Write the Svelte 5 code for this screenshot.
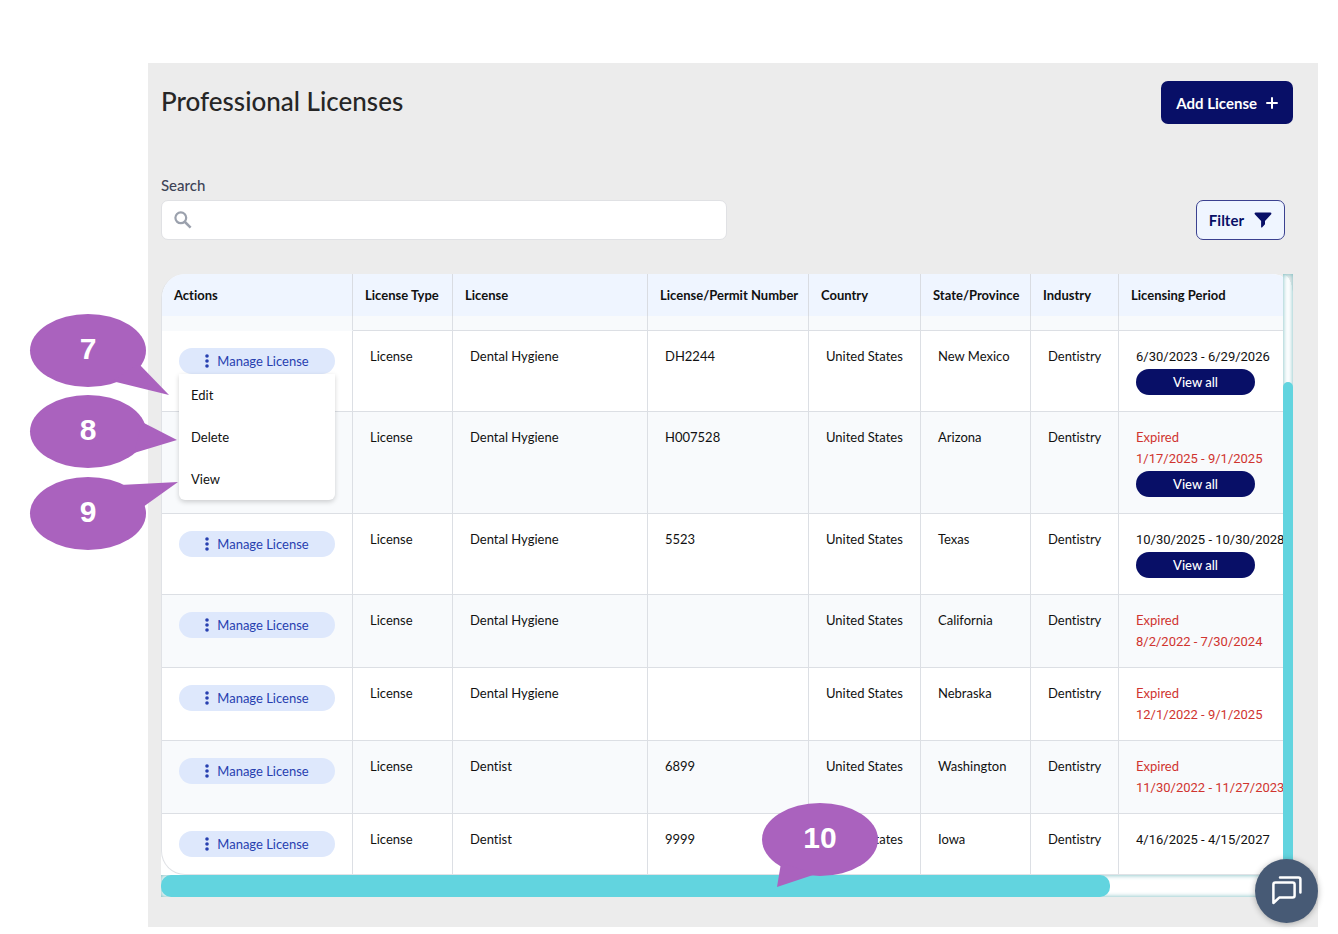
<script>
	const columns = [
		{ label: 'Actions', width: 191 },
		{ label: 'License Type', width: 100 },
		{ label: 'License', width: 195 },
		{ label: 'License/Permit Number', width: 161 },
		{ label: 'Country', width: 112 },
		{ label: 'State/Province', width: 110 },
		{ label: 'Industry', width: 88 },
		{ label: 'Licensing Period' }
	];

	const licenses = [
		{ license: 'Dental Hygiene', number: 'DH2244', state: 'New Mexico', period: '6/30/2023 - 6/29/2026', more: true },
		{ license: 'Dental Hygiene', number: 'H007528', state: 'Arizona', period: '1/17/2025 - 9/1/2025', expired: true, more: true },
		{ license: 'Dental Hygiene', number: '5523', state: 'Texas', period: '10/30/2025 - 10/30/2028', more: true },
		{ license: 'Dental Hygiene', number: '', state: 'California', period: '8/2/2022 - 7/30/2024', expired: true },
		{ license: 'Dental Hygiene', number: '', state: 'Nebraska', period: '12/1/2022 - 9/1/2025', expired: true },
		{ license: 'Dentist', number: '6899', state: 'Washington', period: '11/30/2022 - 11/27/2023', expired: true },
		{ license: 'Dentist', number: '9999', state: 'Iowa', period: '4/16/2025 - 4/15/2027' }
	];

	// x/y is the top left of the bubble, the tail is relative to it
	const callouts = [
		{ label: '7', x: 30, y: 314, tail: '109,50 139,81 82,67' },
		{ label: '8', x: 30, y: 395, tail: '112,27 147,45 104,58' },
		{ label: '9', x: 30, y: 477, tail: '90,8 148,5 113,30' },
		{ label: '10', x: 762, y: 803, tail: '19,60 15,84 54,71' }
	];

	let query = $state('');
	let openMenu = $state(0);

	function toggleMenu(i) {
		openMenu = openMenu === i ? -1 : i;
	}
</script>

<div class="page">
	<main>
		<header>
			<h1>Professional Licenses</h1>
			<button class="add">
				Add License
				<svg width="12" height="12" viewBox="0 0 12 12" aria-hidden="true">
					<path d="M6 1v10M1 6h10" stroke="currentColor" stroke-width="2" stroke-linecap="round" />
				</svg>
			</button>
		</header>

		<div class="toolbar">
			<div class="search">
				<label for="search">Search</label>
				<div class="field">
					<svg width="18" height="18" viewBox="0 0 18 18" fill="none" aria-hidden="true">
						<circle cx="6.8" cy="6.8" r="5.4" stroke="currentColor" stroke-width="2.2" />
						<path d="M11 11l5.6 5.6" stroke="currentColor" stroke-width="2.5" />
					</svg>
					<input id="search" type="text" bind:value={query} />
				</div>
			</div>
			<button class="filter">
				Filter
				<svg width="18" height="16" viewBox="0 0 18 16" aria-hidden="true">
					<path
						d="M1.6.5h14.8c.9 0 1.3 1 .8 1.7L11 9.1v3.2L8 15.4c-.4.3-.9.1-.9-.4V9.1L.8 2.2C.3 1.5.7.5 1.6.5z"
						fill="currentColor"
					/>
				</svg>
			</button>
		</div>

		<div class="scroller">
			<div class="view">
				<table>
					<colgroup>
						{#each columns as column}
							<col style:width={column.width ? `${column.width}px` : 'auto'} />
						{/each}
					</colgroup>
					<thead>
						<tr>
							{#each columns as column}
								<th scope="col">{column.label}</th>
							{/each}
						</tr>
					</thead>
					<tbody>
						<!-- tail end of the row scrolled under the header -->
						<tr class="cut" aria-hidden="true">
							{#each columns as column}
								<td></td>
							{/each}
						</tr>
						{#each licenses as row, i}
							<tr>
								<td class="actions">
									<div class="menu-anchor">
										<button class="manage" aria-expanded={openMenu === i} onclick={() => toggleMenu(i)}>
											<svg width="4" height="14" viewBox="0 0 4 14" aria-hidden="true">
												<circle cx="2" cy="2" r="1.8" />
												<circle cx="2" cy="7" r="1.8" />
												<circle cx="2" cy="12" r="1.8" />
											</svg>
											Manage License
										</button>
										{#if openMenu === i}
											<div class="menu">
												<button>Edit</button>
												<button>Delete</button>
												<button>View</button>
											</div>
										{/if}
									</div>
								</td>
								<td>License</td>
								<td>{row.license}</td>
								<td>{row.number}</td>
								<td>United States</td>
								<td>{row.state}</td>
								<td>Dentistry</td>
								<td class:expired={row.expired}>
									{#if row.expired}
										<div>Expired</div>
									{/if}
									<div class="period">{row.period}</div>
									{#if row.more}
										<button class="view-all">View all</button>
									{/if}
								</td>
							</tr>
						{/each}
					</tbody>
				</table>
			</div>
			<div class="track vertical"><div class="thumb"></div></div>
			<div class="track horizontal"><div class="thumb"></div></div>
		</div>

		<button class="chat" aria-label="Open chat">
			<svg width="30" height="30" viewBox="0 0 30 30" fill="none" aria-hidden="true">
				<path
					d="M3.4 6.4h17.2c1.2 0 2 .8 2 2v11.2c0 1.2-.8 2-2 2H7.2L1.4 27V8.4c0-1.2.8-2 2-2z"
					stroke="currentColor"
					stroke-width="2.5"
					stroke-linejoin="round"
				/>
				<path
					d="M8 1.6h18.4c1.2 0 2 .8 2 2v12.8"
					stroke="currentColor"
					stroke-width="2.5"
					stroke-linecap="round"
				/>
			</svg>
		</button>
	</main>

	{#each callouts as callout}
		<svg class="callout" width="116" height="73" style:left="{callout.x}px" style:top="{callout.y}px">
			<ellipse cx="58" cy="36.5" rx="58" ry="36.5" />
			<polygon points={callout.tail} />
			<text x="58" y="45" text-anchor="middle">{callout.label}</text>
		</svg>
	{/each}
</div>

<style>
	:global(body) {
		margin: 0;
		background: #fff;
	}

	.page {
		position: relative;
		padding: 63px 20px 7px 148px;
		font-family: Lato, 'Open Sans', sans-serif;
		font-size: 13px;
		font-variant-ligatures: none;
		color: #111;
	}

	main {
		position: relative;
		padding: 18px 25px 30px 13px;
		background: #ececec;
	}

	button,
	input {
		font: inherit;
		font-variant-ligatures: none;
		color: inherit;
		border: 0;
		margin: 0;
		padding: 0;
		background: none;
	}

	button {
		cursor: pointer;
	}

	header {
		display: flex;
		justify-content: space-between;
		align-items: flex-start;
	}

	h1 {
		margin: 0;
		font-size: 26px;
		line-height: 40px;
		font-weight: 500;
		color: #262626;
	}

	.add {
		display: flex;
		align-items: center;
		gap: 9px;
		height: 43px;
		padding: 0 15px;
		border-radius: 7px;
		background: #080f67;
		color: #fff;
		font-size: 15px;
		font-weight: 700;
	}

	.toolbar {
		display: flex;
		justify-content: space-between;
		align-items: flex-end;
		margin-top: 52px;
	}

	.search {
		width: 50%;

		& label {
			display: block;
			margin-bottom: 5px;
			font-size: 15px;
			line-height: 19px;
			font-weight: 500;
			color: #3d4356;
		}
	}

	.field {
		display: flex;
		align-items: center;
		gap: 10px;
		height: 38px;
		padding: 0 12px;
		border: 1px solid #e0e1e4;
		border-radius: 7px;
		background: #fff;
		color: #9ba1ad;

		& input {
			flex: 1;
			height: 100%;
			outline: none;
			color: #111;
		}
	}

	.filter {
		display: flex;
		align-items: center;
		gap: 10px;
		height: 40px;
		margin-right: 8px;
		padding: 0 12px;
		border: 1px solid #3b4190;
		border-radius: 7px;
		background: #eff5ff;
		color: #080f67;
		font-size: 15px;
		font-weight: 700;
	}

	.scroller {
		display: grid;
		grid-template-columns: minmax(0, 1fr) 10px;
		grid-template-rows: auto 22px;
		margin-top: 34px;
		background: linear-gradient(#ececec 50%, #fff 50%);
	}

	.view {
		overflow: hidden;
		border: 1px solid #e0e2e6;
		border-width: 0 0 1px 1px;
		border-radius: 24px 0 0 24px;
		border-top-right-radius: 13px 4px;
		background: #fff;
	}

	table {
		width: 100%;
		table-layout: fixed;
		border-collapse: separate;
		border-spacing: 0;
	}

	th {
		height: 42px;
		padding: 0 12px;
		box-sizing: border-box;
		border-right: 1px solid #d9dce2;
		background: #eff5ff;
		text-align: left;
		font-weight: 700;
		white-space: nowrap;
	}

	td {
		padding: 15px 16px 15px 17px;
		border-right: 1px solid #dcdfe4;
		border-bottom: 1px solid #dcdfe4;
		line-height: 21px;
		vertical-align: top;
		white-space: nowrap;
	}

	th:last-child,
	td:last-child {
		border-right: 0;
	}

	tbody tr:nth-child(odd) {
		background: #f8fafc;
	}

	.cut td {
		height: 14px;
		padding: 0;
	}

	.cut td:first-child {
		border-bottom-color: #f8fafc;
	}

	tbody tr:last-child td {
		padding-bottom: 24px;
		border-bottom: 0;
	}

	td.actions,
	tbody tr:last-child td.actions {
		padding: 17px 17px 0;
	}

	.menu-anchor {
		position: relative;
	}

	.manage {
		display: flex;
		justify-content: center;
		align-items: center;
		gap: 8px;
		width: 100%;
		height: 26px;
		border-radius: 13px;
		background: #dee8fc;
		color: #2840b0;

		& svg {
			fill: currentColor;
		}
	}

	.menu {
		position: absolute;
		top: 26px;
		left: 0;
		right: 0;
		z-index: 1;
		border-radius: 0 0 6px 6px;
		background: #fff;
		box-shadow: 0 2px 5px rgba(0, 0, 0, 0.18);

		& button {
			display: block;
			width: 100%;
			height: 42px;
			padding: 0 12px;
			text-align: left;
		}
	}

	.expired {
		color: #d0342f;
	}

	/* narrower figures, so the date ranges fit the column */
	.period {
		font-family: Roboto, Lato, sans-serif;
	}

	.view-all {
		display: block;
		width: 119px;
		height: 26px;
		margin: 2px 0 1px;
		border-radius: 13px;
		background: #080f67;
		color: #fff;
		font-weight: 500;
	}

	.track {
		box-shadow: inset 0 0 5px #6fb6bb;
	}

	.vertical {
		display: flex;
		align-items: flex-end;
		background: radial-gradient(10px 22px at 0 22px, #fff 97%, transparent) top / 100% 22px no-repeat,
			linear-gradient(#fff, #fff) 0 22px no-repeat;

		& .thumb {
			width: 100%;
			height: 82%;
			border-radius: 5px 5px 0 0;
		}
	}

	.horizontal {
		grid-column: 1 / -1;
		background: #fff;

		& .thumb {
			width: 949px;
			max-width: 84%;
			height: 100%;
			border-radius: 10px;
		}
	}

	.thumb {
		background: #62d4df;
	}

	.chat {
		position: absolute;
		right: 0;
		bottom: 4px;
		display: grid;
		place-items: center;
		width: 63px;
		height: 64px;
		border-radius: 50%;
		background: #475a75;
		color: #fff;
		box-shadow: 0 1px 6px rgba(0, 0, 0, 0.3);
	}

	.callout {
		position: absolute;
		overflow: visible;
		fill: #aa62be;

		& text {
			fill: #fff;
			font: bold 30px 'Liberation Sans', Arial, sans-serif;
		}
	}
</style>
